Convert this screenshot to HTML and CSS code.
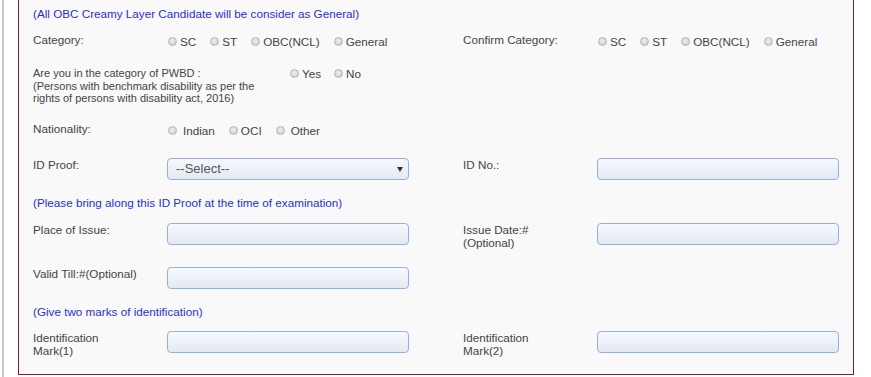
FILE: index.html
```html
<!DOCTYPE html>
<html>
<head>
<meta charset="utf-8">
<link rel="stylesheet" href="styles.css">
</head>
<body>
<div class="page">
  <div class="stripe"></div>
  <div class="panel">
    <p class="note n1">(All OBC Creamy Layer Candidate will be consider as General)</p>

    <div class="row r-cat">
      <div class="lbl">Category:</div>
      <div class="radios">
        <label class="opt"><input type="radio" class="rb" name="cat">SC</label>
        <label class="opt"><input type="radio" class="rb" name="cat">ST</label>
        <label class="opt"><input type="radio" class="rb" name="cat">OBC(NCL)</label>
        <label class="opt"><input type="radio" class="rb" name="cat">General</label>
      </div>
      <div class="lbl">Confirm Category:</div>
      <div class="radios">
        <label class="opt"><input type="radio" class="rb" name="ccat">SC</label>
        <label class="opt"><input type="radio" class="rb" name="ccat">ST</label>
        <label class="opt"><input type="radio" class="rb" name="ccat">OBC(NCL)</label>
        <label class="opt"><input type="radio" class="rb" name="ccat">General</label>
      </div>
    </div>

    <div class="row-pwbd">
      <div class="lbl-small">Are you in the category of PWBD :<br>(Persons with benchmark disability as per the<br>rights of persons with disability act, 2016)</div>
      <div class="radios radios-pwbd">
        <label class="opt"><input type="radio" class="rb" name="pwbd">Yes</label>
        <label class="opt"><input type="radio" class="rb" name="pwbd">No</label>
      </div>
    </div>

    <div class="row r-nat">
      <div class="lbl">Nationality:</div>
      <div class="radios">
        <label class="opt"><input type="radio" class="rb sp" name="nat">Indian</label>
        <label class="opt"><input type="radio" class="rb" name="nat">OCI</label>
        <label class="opt"><input type="radio" class="rb sp" name="nat">Other</label>
      </div>
    </div>

    <div class="row row-input r-id">
      <div class="lbl">ID Proof:</div>
      <div class="field">
        <div class="select"><span class="sel-text">--Select--</span><span class="arrow"></span></div>
      </div>
      <div class="lbl">ID No.:</div>
      <div class="field"><input class="inp" type="text"></div>
    </div>

    <p class="note n2">(Please bring along this ID Proof at the time of examination)</p>

    <div class="row row-input r-place">
      <div class="lbl">Place of Issue:</div>
      <div class="field"><input class="inp" type="text"></div>
      <div class="lbl">Issue Date:#<br>(Optional)</div>
      <div class="field"><input class="inp" type="text"></div>
    </div>

    <div class="row row-input r-valid">
      <div class="lbl">Valid Till:#(Optional)</div>
      <div class="field"><input class="inp" type="text"></div>
    </div>

    <p class="note n3">(Give two marks of identification)</p>

    <div class="row r-ident">
      <div class="lbl">Identification<br>Mark(1)</div>
      <div class="field"><input class="inp" type="text"></div>
      <div class="lbl">Identification<br>Mark(2)</div>
      <div class="field"><input class="inp" type="text"></div>
    </div>
  </div>
</div>
</body>
</html>
```

FILE: styles.css
```css
html, body {
  margin: 0;
  padding: 0;
  background: #ffffff;
}
body {
  font-family: "Liberation Sans", Arial, sans-serif;
  font-size: 11.7px;
  color: #444444;
}
.page {
  display: flex;
  align-items: stretch;
  height: 377px;
}
.stripe {
  width: 2px;
  margin-left: 2px;
  background: #c9c9c9;
}
.panel {
  margin-left: 14px;
  width: 806px;
  height: 350px;
  padding: 7px 14px 17px 14px;
  background: #f9f9f9;
  border: 1px solid #7e1d2c;
  border-top: none;
  flex: none;
}
.note {
  margin: 0;
  color: #2a2fd0;
  font-size: 11.7px;
  line-height: 13px;
}
.n1 { margin-bottom: 13px; }
.n2 { margin-bottom: 14px; }
.n3 { margin-bottom: 13px; }

.row {
  display: grid;
  grid-template-columns: 134px 296px 134px 242px;
  align-items: start;
}
.row-input {
  grid-template-rows: 22px;
}
.lbl {
  line-height: 13px;
  color: #444;
}
.lbl-small {
  font-size: 11px;
  line-height: 12.6px;
  color: #444;
  width: 256px;
  flex: none;
}
.radios {
  display: flex;
  align-items: center;
  padding-top: 2px;
  padding-left: 1px;
  line-height: 13px;
  white-space: nowrap;
}
.opt {
  display: inline-flex;
  align-items: center;
  margin-right: 14px;
  font-size: 11.7px;
  color: #444;
}
.rb {
  -webkit-appearance: none;
  appearance: none;
  width: 9px;
  height: 9px;
  margin: 0 3px 0 0;
  border: 1px solid #b5b5b5;
  border-radius: 50%;
  background: radial-gradient(circle at 45% 40%, #f0f0f0 0%, #d9d9d9 55%, #c4c4c4 100%);
  box-sizing: border-box;
}
.rb.sp { margin-right: 6px; }

.r-cat { margin-bottom: 19px; }
.row-pwbd {
  display: flex;
  align-items: flex-start;
  margin-bottom: 17px;
}
.radios-pwbd { padding-top: 0; }
.radios-pwbd .opt { margin-right: 13px; }
.r-nat { margin-bottom: 21px; }
.r-id { margin-bottom: 16px; }
.r-place { margin-bottom: 22px; }
.r-valid { margin-bottom: 16px; }

.field {
  width: 242px;
}
.inp, .select {
  display: block;
  box-sizing: border-box;
  width: 242px;
  height: 22px;
  margin: 0;
  padding: 0 8px;
  border: 1px solid #8fb3de;
  border-radius: 4px;
  background: linear-gradient(#f6f8fc, #e3e9f2);
  font-family: inherit;
  outline: none;
}
.select {
  position: relative;
  display: flex;
  align-items: center;
  font-size: 13px;
  color: #555;
}
.sel-text {
  line-height: 20px;
}
.arrow {
  position: absolute;
  right: 5px;
  top: 8px;
  width: 0;
  height: 0;
  border-left: 3px solid transparent;
  border-right: 3px solid transparent;
  border-top: 5px solid #333;
}
```
